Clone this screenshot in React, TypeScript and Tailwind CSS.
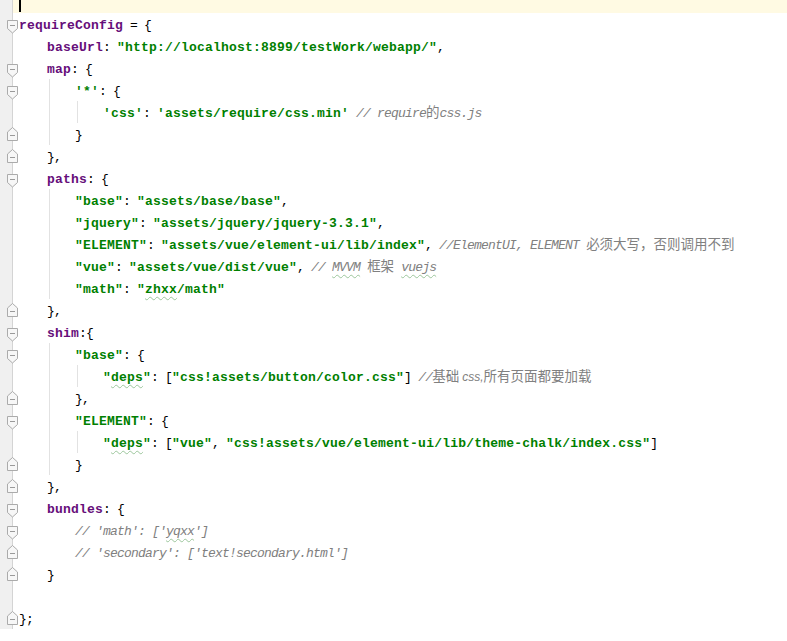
import React from 'react';

type Kind = 'k' | 's' | 'p' | 'c' | 'z' | 'i';
type Seg = { t: string; kind: Kind; wavy?: boolean };
type Fold = 'open' | 'close' | null;
type Row = { indent: number; fold: Fold; guides: number[]; segs: Seg[] };

const k = (t: string): Seg => ({ t, kind: 'k' });
const s = (t: string, wavy?: boolean): Seg => ({ t, kind: 's', wavy });
const p = (t: string): Seg => ({ t, kind: 'p' });
const c = (t: string, wavy?: boolean): Seg => ({ t, kind: 'c', wavy });
const z = (t: string): Seg => ({ t, kind: 'z' });
const i = (t: string): Seg => ({ t, kind: 'i' });

const kindClass: Record<Kind, string> = {
  k: 'font-bold text-[#660e7a] tracking-[0.2px]',
  s: 'font-bold text-[#008000] tracking-[0.2px]',
  p: 'text-black tracking-[-0.8px]',
  c: 'italic text-[#808080] tracking-[-0.8px]',
  z: "not-italic leading-none text-[#808080] text-[13.5px] tracking-normal font-['Noto_Sans_CJK_SC',sans-serif]",
  i: "italic leading-none text-[#808080] text-[12px] tracking-normal font-['Liberation_Sans',sans-serif]",
};

const indentClass = ['pl-[6px]', 'pl-[34px]', 'pl-[62px]', 'pl-[90px]'];
const guideClass: Record<number, string> = { 1: 'left-[36px]', 2: 'left-[64px]' };

// строки редактора (после строки с курсором)
const rows: Row[] = [
  { indent: 0, fold: 'open', guides: [], segs: [k('requireConfig'), p(' = {')] },
  { indent: 1, fold: null, guides: [], segs: [k('baseUrl'), p(': '), s('"http://localhost:8899/testWork/webapp/"'), p(',')] },
  { indent: 1, fold: 'open', guides: [], segs: [k('map'), p(': {')] },
  { indent: 2, fold: 'open', guides: [1], segs: [s("'*'"), p(': {')] },
  {
    indent: 3,
    fold: null,
    guides: [1, 2],
    segs: [s("'css'"), p(': '), s("'assets/require/css.min'"), p(' '), c('// require'), z('的'), c('css.js')],
  },
  { indent: 2, fold: 'close', guides: [1], segs: [p('}')] },
  { indent: 1, fold: 'close', guides: [], segs: [p('},')] },
  { indent: 1, fold: 'open', guides: [], segs: [k('paths'), p(': {')] },
  { indent: 2, fold: null, guides: [1], segs: [s('"base"'), p(': '), s('"assets/base/base"'), p(',')] },
  { indent: 2, fold: null, guides: [1], segs: [s('"jquery"'), p(': '), s('"assets/jquery/jquery-3.3.1"'), p(',')] },
  {
    indent: 2,
    fold: null,
    guides: [1],
    segs: [s('"ELEMENT"'), p(': '), s('"assets/vue/element-ui/lib/index"'), p(', '), c('//ElementUI, ELEMENT '), z('必须大写，否则调用不到')],
  },
  {
    indent: 2,
    fold: null,
    guides: [1],
    segs: [s('"vue"'), p(': '), s('"assets/vue/dist/vue"'), p(', '), c('// '), c('MVVM', true), c(' '), z('框架'), c(' '), c('vuejs', true)],
  },
  { indent: 2, fold: null, guides: [1], segs: [s('"math"'), p(': '), s('"'), s('zhxx', true), s('/math"')] },
  { indent: 1, fold: 'close', guides: [], segs: [p('},')] },
  { indent: 1, fold: 'open', guides: [], segs: [k('shim'), p(':{')] },
  { indent: 2, fold: 'open', guides: [1], segs: [s('"base"'), p(': {')] },
  {
    indent: 3,
    fold: null,
    guides: [1, 2],
    segs: [s('"'), s('deps', true), s('"'), p(': ['), s('"css!assets/button/color.css"'), p('] '), c('//'), z('基础 '), i('css,'), z('所有页面都要加载')],
  },
  { indent: 2, fold: 'close', guides: [1], segs: [p('},')] },
  { indent: 2, fold: 'open', guides: [1], segs: [s('"ELEMENT"'), p(': {')] },
  {
    indent: 3,
    fold: null,
    guides: [1, 2],
    segs: [s('"'), s('deps', true), s('"'), p(': ['), s('"vue"'), p(', '), s('"css!assets/vue/element-ui/lib/theme-chalk/index.css"'), p(']')],
  },
  { indent: 2, fold: 'close', guides: [1], segs: [p('}')] },
  { indent: 1, fold: 'close', guides: [], segs: [p('},')] },
  { indent: 1, fold: 'open', guides: [], segs: [k('bundles'), p(': {')] },
  { indent: 2, fold: 'open', guides: [], segs: [c("// 'math': ['"), c('yqxx', true), c("']")] },
  { indent: 2, fold: 'close', guides: [], segs: [c("// 'secondary': ['text!secondary.html']")] },
  { indent: 1, fold: 'close', guides: [], segs: [p('}')] },
  { indent: 0, fold: null, guides: [], segs: [] },
  { indent: 0, fold: 'close', guides: [], segs: [p('};')] },
];

const FoldMark = ({ type }: { type: 'open' | 'close' }) =>
  type === 'open' ? (
    <svg width="11" height="14" viewBox="0 0 11 14" className="absolute left-[7px] top-[7px] z-10">
      <path d="M0.5 0.5 H10.5 V8.5 L5.5 13 L0.5 8.5 Z" fill="#f7f7f7" stroke="#ababab" />
      <path d="M3 5.5 H8" stroke="#9a9a9a" />
    </svg>
  ) : (
    <svg width="11" height="14" viewBox="0 0 11 14" className="absolute left-[7px] top-[4px] z-10">
      <path d="M5.5 0.5 L10.5 5 V13.5 H0.5 V5 Z" fill="#f7f7f7" stroke="#ababab" />
      <path d="M3 8.5 H8" stroke="#9a9a9a" />
    </svg>
  );

const CodeLine = ({ row }: { row: Row }) => (
  <div className="flex h-[22px]">
    <div className="relative w-[13px] shrink-0 bg-[#f0f0f0] border-r border-[#d4d4d4]">
      {row.fold && <FoldMark type={row.fold} />}
    </div>
    <div className={`relative flex-1 whitespace-pre leading-[22px] pt-[2px] ${indentClass[row.indent]}`}>
      {row.guides.map((g) => (
        <div key={g} className={`absolute top-0 bottom-0 w-px bg-[#e2e2e2] ${guideClass[g]}`} />
      ))}
      {row.segs.map((seg, idx) => (
        <span
          key={idx}
          className={`${kindClass[seg.kind]} ${seg.wavy ? 'underline decoration-wavy decoration-[#9cc69c] underline-offset-[3px] decoration-1' : ''}`}
        >
          {seg.t}
        </span>
      ))}
    </div>
  </div>
);

export default function App() {
  return (
    <div className="w-[787px] h-[641px] overflow-hidden bg-white font-['Liberation_Mono',monospace] text-[13px]">
      {/* строка с курсором, видна только нижняя часть */}
      <div className="flex h-[13px]">
        <div className="w-[13px] shrink-0 bg-[#f0f0f0] border-r border-[#d4d4d4]" />
        <div className="relative flex-1 bg-[#fffae3]">
          <div className="absolute left-[6px] top-0 h-[12px] w-[2px] bg-black" />
        </div>
      </div>
      {rows.map((row, idx) => (
        <CodeLine key={idx} row={row} />
      ))}
    </div>
  );
}
